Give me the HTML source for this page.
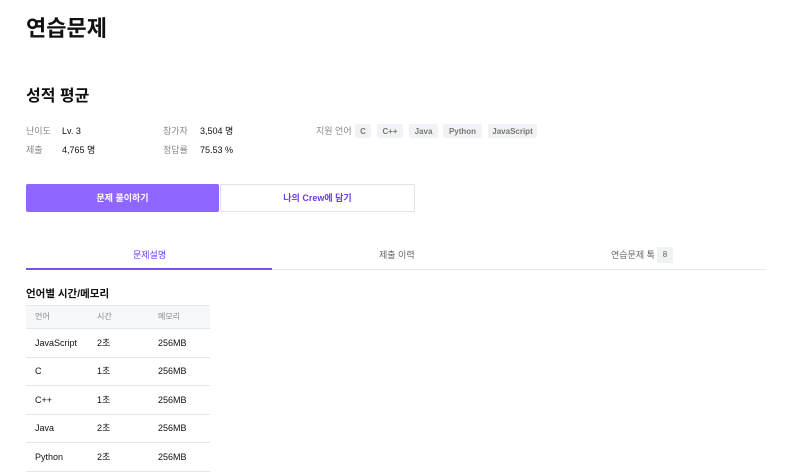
<!DOCTYPE html>
<html><head><meta charset="utf-8"><style>
*{margin:0;padding:0;box-sizing:border-box}
body{width:800px;height:474px;overflow:hidden;background:#fff;font-family:"Liberation Sans","Noto Sans CJK KR",sans-serif;color:#111;position:relative}
.a{position:absolute;white-space:nowrap;line-height:12px}
.lbl{font-size:9px;color:#888}
.val{font-size:9px;color:#111}
.tag{position:absolute;top:124px;height:14px;background:#f1f2f5;border-radius:2px;font-size:8px;color:#777;font-weight:bold;display:flex;align-items:center;justify-content:center}
table{position:absolute;left:26px;top:305px;width:184px;border-collapse:collapse;font-size:9px}
th{height:23px;background:#f7f8fa;color:#888;font-weight:normal;text-align:left;padding-left:9px;border-top:1px solid #e6e6e6;border-bottom:1px solid #e6e6e6;font-size:8px;line-height:10px}
td{height:28.5px;padding-left:9px;border-bottom:1px solid #e6e6e6;line-height:10px;vertical-align:middle}
</style></head><body>
<div class="a" style="left:26px;top:16px;font-size:22px;line-height:26px;font-weight:bold">연습문제</div>
<div class="a" style="left:26px;top:87px;font-size:16px;line-height:20px;font-weight:bold">성적 평균</div>
<div class="a lbl" style="left:26px;top:125px">난이도</div><div class="a val" style="left:62px;top:125px">Lv. 3</div>
<div class="a lbl" style="left:26px;top:144px">제출</div><div class="a val" style="left:62px;top:144px">4,765 명</div>
<div class="a lbl" style="left:163px;top:125px">참가자</div><div class="a val" style="left:200px;top:125px">3,504 명</div>
<div class="a lbl" style="left:163px;top:144px">정답률</div><div class="a val" style="left:200px;top:144px">75.53 %</div>
<div class="a lbl" style="left:316px;top:125px">지원 언어</div>
<div class="tag" style="left:355px;width:16px">C</div>
<div class="tag" style="left:377px;width:26px">C++</div>
<div class="tag" style="left:409px;width:29px">Java</div>
<div class="tag" style="left:443px;width:39px">Python</div>
<div class="tag" style="left:488px;width:49px">JavaScript</div>
<div class="a" style="left:26px;top:184px;width:193px;height:28px;background:#8f66ff;border-radius:2px;color:#fff;font-size:9px;font-weight:bold;text-align:center;line-height:28px">문제 풀이하기</div>
<div class="a" style="left:220px;top:184px;width:195px;height:28px;border:1px solid #e3e3e3;border-radius:2px;color:#6b3cf0;font-size:9px;font-weight:bold;text-align:center;line-height:26px">나의 Crew에 담기</div>
<div class="a" style="left:26px;top:269px;width:740px;height:1px;background:#e8e8e8"></div>
<div class="a" style="left:26px;top:268px;width:246px;height:2px;background:#7b52f5"></div>
<div class="a" style="left:133px;top:249px;font-size:9px;color:#6b3cf0">문제설명</div>
<div class="a" style="left:379px;top:249px;font-size:9px;color:#666">제출 이력</div>
<div class="a" style="left:611px;top:249px;font-size:9px;color:#666">연습문제 톡</div>
<div class="a" style="left:657px;top:247px;width:16px;height:16px;background:#f1f2f5;font-size:8px;color:#666;text-align:center;line-height:16px">8</div>
<div class="a" style="left:26px;top:287px;font-size:10.5px;line-height:14px;font-weight:bold">언어별 시간/메모리</div>
<table>
<tr><th style="width:62px">언어</th><th style="width:61px">시간</th><th>메모리</th></tr>
<tr><td>JavaScript</td><td>2초</td><td>256MB</td></tr>
<tr><td>C</td><td>1초</td><td>256MB</td></tr>
<tr><td>C++</td><td>1초</td><td>256MB</td></tr>
<tr><td>Java</td><td>2초</td><td>256MB</td></tr>
<tr><td>Python</td><td>2초</td><td>256MB</td></tr>
</table>
</body></html>
